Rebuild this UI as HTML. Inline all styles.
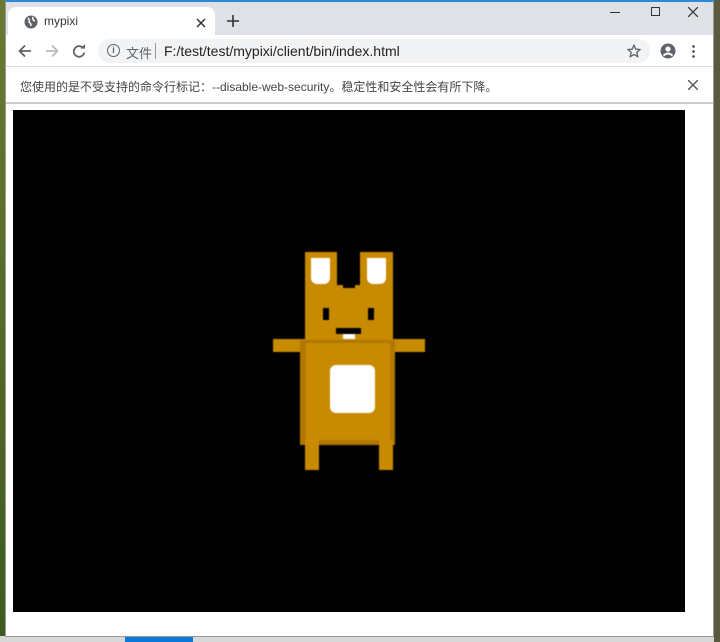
<!DOCTYPE html>
<html><head><meta charset="utf-8"><style>
*{margin:0;padding:0;box-sizing:border-box}
body{width:720px;height:642px;overflow:hidden;position:relative;background:#5a6e2a;font-family:"Liberation Sans","Noto Sans CJK SC",sans-serif}
.a{position:absolute}
.o{background:#c88a00}
.w{background:#fff}
.k{background:#000}
#bun{filter:blur(0.6px)}
</style></head><body>
<div class="a" style="left:0;top:0;width:6px;height:642px;background:linear-gradient(#6a7a30,#3e5a20)"></div>
<div class="a" style="left:0;top:636px;width:720px;height:6px;background:#d8d8d8"></div>
<div class="a" style="left:125px;top:636px;width:68px;height:6px;background:#0a78d4"></div>
<div class="a" style="left:714px;top:0;width:6px;height:642px;background:#5a5a40"></div>
<div class="a" style="left:5px;top:0;width:709px;height:637px;background:#fff;border:1px solid #999;border-top:2px solid #2b8ad8"></div>
<div class="a" style="left:6px;top:2px;width:707px;height:33px;background:#dee1e6"></div>
<div class="a" style="left:8px;top:7px;width:207px;height:29px;background:#fff;border-radius:8px 8px 0 0"></div>
<svg class="a" style="left:24px;top:15px" width="14" height="14" viewBox="0 0 14 14"><circle cx="7" cy="7" r="6.5" fill="#5f6368"/><path d="M4 3 Q6 5 5 7 Q7 8 7 11 M9 2 Q8 5 11 6" stroke="#fff" stroke-width="1.5" fill="none"/></svg>
<div class="a" style="left:44px;top:14px;font-size:12px;color:#333">mypixi</div>
<svg class="a" style="left:196px;top:18px" width="10" height="10" viewBox="0 0 10 10"><path d="M1 1L9 9M9 1L1 9" stroke="#333" stroke-width="1.5"/></svg>
<svg class="a" style="left:227px;top:15px" width="12" height="12" viewBox="0 0 12 12"><path d="M6 0V12M0 6H12" stroke="#333" stroke-width="1.6"/></svg>
<div class="a" style="left:610px;top:12px;width:10px;height:1px;background:#333"></div>
<div class="a" style="left:651px;top:7px;width:9px;height:9px;border:1px solid #333"></div>
<svg class="a" style="left:688px;top:7px" width="10" height="10" viewBox="0 0 10 10"><path d="M0 0L10 10M10 0L0 10" stroke="#333" stroke-width="1.2"/></svg>
<svg class="a" style="left:18px;top:44px" width="14" height="14" viewBox="0 0 14 14"><path d="M13 7H2M7 1.5L1.5 7L7 12.5" stroke="#5f6368" stroke-width="1.8" fill="none"/></svg>
<svg class="a" style="left:45px;top:44px" width="14" height="14" viewBox="0 0 14 14"><path d="M1 7H12M7 1.5L12.5 7L7 12.5" stroke="#bbb" stroke-width="1.8" fill="none"/></svg>
<svg class="a" style="left:72px;top:44px" width="14" height="14" viewBox="0 0 14 14"><path d="M11.5 4.5A5.3 5.3 0 1 0 12.3 8.5" stroke="#5f6368" stroke-width="1.8" fill="none"/><path d="M8.5 4.5H13V0Z" fill="#5f6368"/></svg>
<div class="a" style="left:98px;top:39px;width:552px;height:24px;background:#f1f3f4;border-radius:12px"></div>
<div class="a" style="left:107px;top:44px;width:13px;height:13px;border:1.5px solid #5f6368;border-radius:50%;font-size:9px;text-align:center;line-height:10px;color:#5f6368;font-weight:bold">i</div>
<div class="a" style="left:126px;top:43px;font-size:13px;color:#5f6368">文件</div>
<div class="a" style="left:155px;top:43px;width:1px;height:16px;background:#999"></div>
<div class="a" style="left:164px;top:43px;font-size:14px;color:#222">F:/test/test/mypixi/client/bin/index.html</div>
<svg class="a" style="left:627px;top:44px" width="14" height="14" viewBox="0 0 14 14"><path d="M7 1L8.8 5.2L13.2 5.5L9.8 8.4L10.9 12.8L7 10.4L3.1 12.8L4.2 8.4L0.8 5.5L5.2 5.2Z" stroke="#5f6368" stroke-width="1.3" fill="none" stroke-linejoin="round"/></svg>
<svg class="a" style="left:660px;top:43px" width="16" height="16" viewBox="0 0 16 16"><circle cx="8" cy="8" r="7.5" fill="#5f6368"/><circle cx="8" cy="6" r="2.6" fill="#fff"/><path d="M3.5 12.5 Q8 8.5 12.5 12.5" stroke="#fff" stroke-width="2" fill="none"/></svg>
<div class="a" style="left:692px;top:44px;width:3px;height:14px;background:radial-gradient(circle,#5f6368 1.3px,transparent 1.5px) 0 0/3px 5px"></div>
<div class="a" style="left:6px;top:66px;width:707px;height:1px;background:#ddd"></div>
<div class="a" style="left:20px;top:78px;font-size:12px;color:#444">您使用的是不受支持的命令行标记：--disable-web-security。稳定性和安全性会有所下降。</div>
<svg class="a" style="left:688px;top:80px" width="10" height="10" viewBox="0 0 10 10"><path d="M0 0L10 10M10 0L0 10" stroke="#555" stroke-width="1.4"/></svg>
<div class="a" style="left:6px;top:102px;width:707px;height:2px;background:#ccc"></div>
<div class="a k" style="left:13px;top:110px;width:672px;height:502px"></div>
<div id="bun" class="a" style="left:0;top:0;width:720px;height:642px">
<div class="a o" style="left:305px;top:252px;width:32px;height:40px"></div>
<div class="a o" style="left:360px;top:252px;width:33px;height:40px"></div>
<div class="a w" style="left:311px;top:258px;width:19px;height:26px;border-radius:0 0 6px 6px"></div>
<div class="a w" style="left:367px;top:258px;width:19px;height:26px;border-radius:0 0 6px 6px"></div>
<div class="a o" style="left:305px;top:285px;width:88px;height:60px"></div>
<div class="a k" style="left:343px;top:280px;width:12px;height:8px"></div>
<div class="a k" style="left:323px;top:308px;width:6px;height:12px"></div>
<div class="a k" style="left:368px;top:308px;width:6px;height:12px"></div>
<div class="a k" style="left:336px;top:328px;width:25px;height:6px"></div>
<div class="a w" style="left:343px;top:334px;width:12px;height:11px"></div>
<div class="a o" style="left:273px;top:339px;width:152px;height:13px"></div>
<div class="a" style="left:300px;top:340px;width:95px;height:105px;background:#b07800"></div>
<div class="a o" style="left:306px;top:343px;width:84px;height:97px"></div>
<div class="a w" style="left:330px;top:365px;width:45px;height:48px;border-radius:6px"></div>
<div class="a o" style="left:305px;top:440px;width:14px;height:30px"></div>
<div class="a o" style="left:379px;top:440px;width:14px;height:30px"></div>
</div>
</body></html>
